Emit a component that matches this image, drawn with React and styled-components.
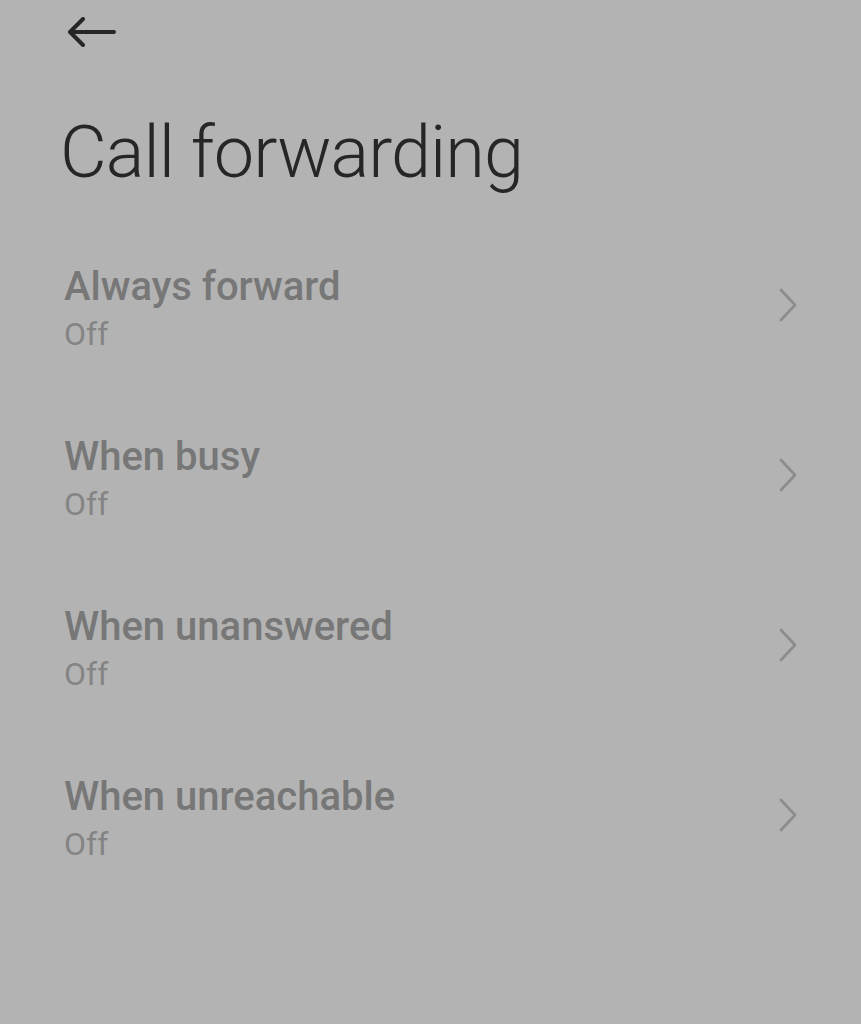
import styled, { createGlobalStyle } from "styled-components";

const Global = createGlobalStyle`
  html, body {
    margin: 0;
    padding: 0;
    background: #b3b3b3;
  }
  body {
    font-family: Roboto, "Noto Sans", sans-serif;
  }
`;

const Page = styled.div`
  width: 861px;
  height: 1024px;
  background: #b3b3b3;
  box-sizing: border-box;
  overflow: hidden;
`;

const Header = styled.div`
  height: 64px;
  display: flex;
  align-items: center;
  padding-left: 66px;
`;

const BackButton = styled.button`
  border: 0;
  background: none;
  padding: 0;
  width: 54px;
  height: 40px;
  display: flex;
  align-items: center;
  cursor: pointer;
`;

const Title = styled.h1`
  margin: 44px 0 0;
  padding-left: 60px;
  font-size: 72px;
  line-height: 90px;
  font-weight: 300;
  color: #262626;
  letter-spacing: -0.9px;
`;

const List = styled.div`
  margin-top: 26px;
  display: flex;
  flex-direction: column;
`;

const Row = styled.div`
  height: 170px;
  display: flex;
  align-items: center;
  justify-content: space-between;
  padding: 0 63px 0 64px;
`;

const Texts = styled.div`
  display: flex;
  flex-direction: column;
  gap: 4px;
`;

const Label = styled.div`
  font-size: 40px;
  line-height: 46px;
  font-weight: 500;
  color: #777777;
`;

const Value = styled.div`
  font-size: 32px;
  line-height: 40px;
  font-weight: 400;
  color: #848484;
`;

const ChevronBox = styled.div`
  display: flex;
  margin-bottom: 8px;
`;

const Chevron = () => (
  <ChevronBox>
    <svg width="20" height="34" viewBox="0 0 20 34" fill="none">
      <path d="M3 2 L17 17 L3 32" stroke="#8c8c8c" strokeWidth="2.6" strokeLinecap="round" strokeLinejoin="round" />
    </svg>
  </ChevronBox>
);

const items = ["Always forward", "When busy", "When unanswered", "When unreachable"];

export default function App() {
  return (
    <Page>
      <Global />
      <Header>
        <BackButton aria-label="Back">
          <svg width="50" height="30" viewBox="0 0 50 30" fill="none">
            <path d="M4 15 H48 M17 2 L4 15 L17 28" stroke="#262626" strokeWidth="4" strokeLinecap="round" strokeLinejoin="round" />
          </svg>
        </BackButton>
      </Header>
      <Title>Call forwarding</Title>
      <List>
        {items.map((t) => (
          <Row key={t}>
            <Texts>
              <Label>{t}</Label>
              <Value>Off</Value>
            </Texts>
            <Chevron />
          </Row>
        ))}
      </List>
    </Page>
  );
}
